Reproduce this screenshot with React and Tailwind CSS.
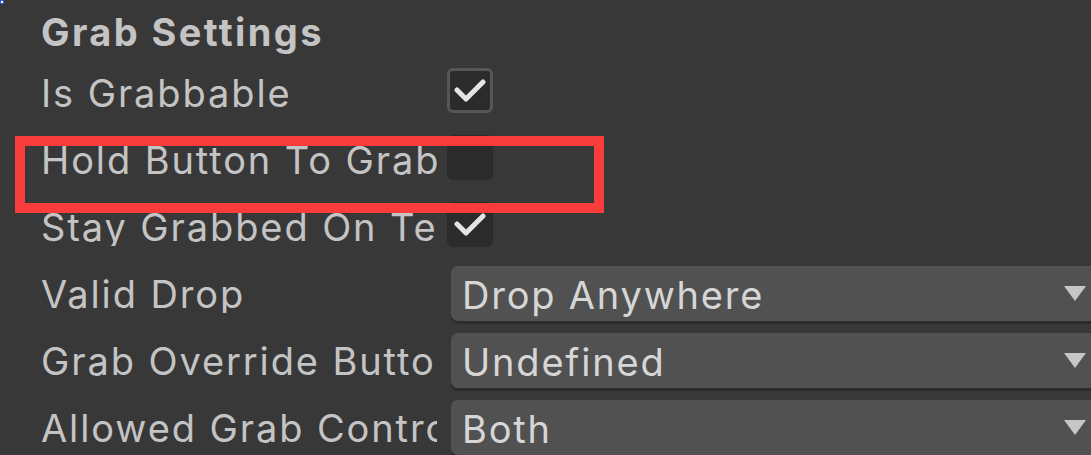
import React from "react";

const font = { fontFamily: "Inter, 'Noto Sans', sans-serif" };

function Check() {
  return (
    <svg width="32" height="24" viewBox="0 0 32 24" className="block">
      <polyline
        points="3,11 12,20 29,3"
        fill="none"
        stroke="#e4e4e4"
        strokeWidth="5"
        strokeLinecap="round"
        strokeLinejoin="round"
      />
    </svg>
  );
}

function Toggle({ checked, focused }) {
  return (
    <div
      className={
        "ml-[10px] w-[46px] h-[45px] shrink-0 rounded-[6px] bg-[#2b2b2b] flex items-center justify-center " +
        (focused ? "border-[3px] border-[#565656]" : "border-[3px] border-[#2b2b2b]")
      }
    >
      {checked && <Check />}
    </div>
  );
}

function Dropdown({ value }) {
  return (
    <div className="ml-[14px] mt-[8px] self-start w-[660px] shrink-0">
      <div className="h-[55px] rounded-[7px] bg-[#515151] flex items-center pl-[11px] pr-[8px] text-[#d6d6d6] shadow-[0_3px_0_#2c2c2c]">
        <span className="flex-1 pt-[3px] text-[38px] tracking-[1.8px] leading-none">{value}</span>
        <span className="mr-[17px] w-0 h-0 border-l-[11px] border-r-[11px] border-t-[15px] border-l-transparent border-r-transparent border-t-[#c6c6c6]" />
      </div>
    </div>
  );
}

function Row({ label, children }) {
  return (
    <div className="h-[67px] flex items-center">
      <div className="w-[396px] shrink-0 overflow-hidden whitespace-nowrap pt-[5px] text-[38px] tracking-[1.9px] leading-none text-[#c4c4c4]">
        {label}
      </div>
      {children}
    </div>
  );
}

export default function App() {
  return (
    <div
      className="relative w-[1091px] h-[455px] overflow-hidden bg-[#383838] pl-[41px]"
      style={font}
    >
      <span className="absolute left-0 top-0 w-[4px] h-[4px] border border-[#2f57c9] bg-white" />

      <div className="h-[57px] pt-[7px] flex items-center">
        <h2 className="text-[38px] tracking-[2.4px] leading-none font-bold text-[#c4c4c4]">Grab Settings</h2>
      </div>

      <Row label="Is Grabbable">
        <Toggle checked focused />
      </Row>
      <Row label="Hold Button To Grab">
        <Toggle />
      </Row>
      <Row label="Stay Grabbed On Teleport">
        <Toggle checked />
      </Row>
      <Row label="Valid Drop">
        <Dropdown value="Drop Anywhere" />
      </Row>
      <Row label="Grab Override Button">
        <Dropdown value="Undefined" />
      </Row>
      <Row label="Allowed Grab Controllers">
        <Dropdown value="Both" />
      </Row>

      {/* red highlight annotation */}
      <div className="absolute left-[15px] top-[136px] w-[589px] h-[77px] border-[10px] border-[#f83b3b] pointer-events-none" />
    </div>
  );
}
